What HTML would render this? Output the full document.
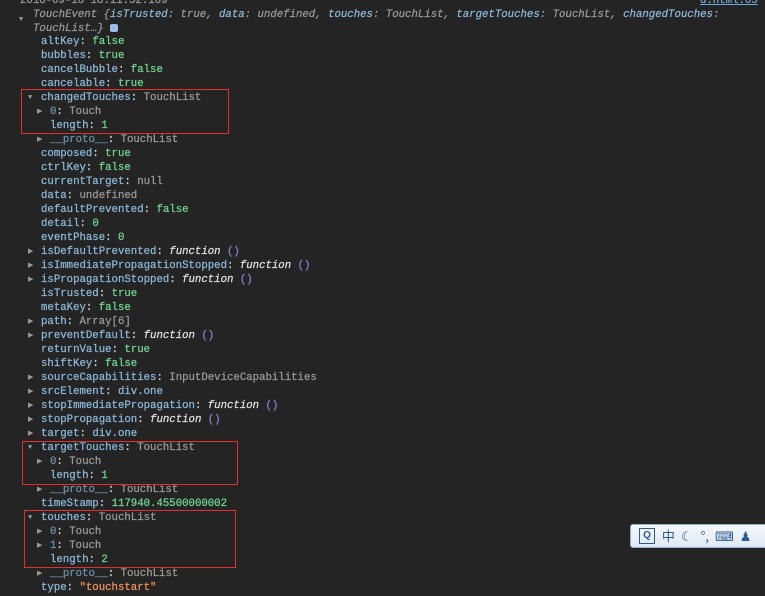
<!DOCTYPE html>
<html><head><meta charset="utf-8"><style>
body{margin:0;width:765px;height:596px;background:#242424;overflow:hidden;position:relative;font-family:"Liberation Mono",monospace;font-size:10.7px;}
.l{position:absolute;height:14px;line-height:14px;white-space:pre;color:#ccc;-webkit-text-stroke:0.25px currentColor}
.k{color:#8cb8d8}.g{color:#72d691}.n{color:#9a9a9a}.f{color:#e0e0e0;font-style:italic}.p{color:#8b7fd4}.s{color:#f0935a}.d{color:#6f8fa8}
.t{position:absolute;color:#9a9a9a;font-size:7px;line-height:14px}
.box{position:absolute;border:1px solid #e03030}
</style></head><body>
<div class="l n" style="left:20px;top:-6px">2018-09-18 18:11:52.169</div>
<div class="l" style="left:700px;top:-6px;color:#6fa8dc;text-decoration:underline">d.html:65</div>
<div class="t" style="left:19px;top:13px">▼</div>
<div class="l n" style="left:33px;top:8px;font-style:italic">TouchEvent {<span class="k">isTrusted</span>: true, <span class="k">data</span>: undefined, <span class="k">touches</span>: TouchList, <span class="k">targetTouches</span>: TouchList, <span class="k">changedTouches</span>:</div>
<div class="l n" style="left:33px;top:22px;font-style:italic">TouchList…} <span style="display:inline-block;width:8px;height:8px;background:#9bbfe6;border-radius:2px;vertical-align:-1px"></span></div>

<div id="rows"></div>
<div class="box" style="left:21px;top:89px;width:206px;height:43px"></div>
<div class="box" style="left:22px;top:441px;width:214px;height:42px"></div>
<div class="box" style="left:24px;top:510px;width:210px;height:56px"></div>

<div style="position:absolute;left:630px;top:524px;width:140px;height:24px;background:linear-gradient(#f4f8fc,#dfe8f2);border:1px solid #8fb0d8;border-radius:3px;box-sizing:border-box;font-family:'Noto Sans CJK SC',sans-serif;color:#2d5a96;font-size:13px;line-height:22px;white-space:nowrap">
<span style="display:inline-block;width:14px;height:14px;border:1px solid #2d5a96;margin:3px 0 0 8px;vertical-align:top;font:bold 10px/14px 'Liberation Sans',sans-serif;text-align:center">Q</span>
<span style="margin-left:4px">中</span><span style="margin-left:6px">☾</span><span style="margin-left:8px">°,</span><span style="margin-left:6px">⌨</span><span style="margin-left:6px">♟</span></div>

<script>
var R=[
[41,'<span class="k">altKey</span>: <span class="g">false</span>'],
[41,'<span class="k">bubbles</span>: <span class="g">true</span>'],
[41,'<span class="k">cancelBubble</span>: <span class="g">false</span>'],
[41,'<span class="k">cancelable</span>: <span class="g">true</span>'],
[41,'<span class="k">changedTouches</span>: <span class="n">TouchList</span>','▼'],
[50,'<span class="d">0</span>: <span class="n">Touch</span>','▶'],
[50,'<span class="k">length</span>: <span class="g">1</span>'],
[50,'<span class="d">__proto__</span>: <span class="n">TouchList</span>','▶'],
[41,'<span class="k">composed</span>: <span class="g">true</span>'],
[41,'<span class="k">ctrlKey</span>: <span class="g">false</span>'],
[41,'<span class="k">currentTarget</span>: <span class="n">null</span>'],
[41,'<span class="k">data</span>: <span class="n">undefined</span>'],
[41,'<span class="k">defaultPrevented</span>: <span class="g">false</span>'],
[41,'<span class="k">detail</span>: <span class="g">0</span>'],
[41,'<span class="k">eventPhase</span>: <span class="g">0</span>'],
[41,'<span class="k">isDefaultPrevented</span>: <span class="f">function</span> <span class="p">()</span>','▶'],
[41,'<span class="k">isImmediatePropagationStopped</span>: <span class="f">function</span> <span class="p">()</span>','▶'],
[41,'<span class="k">isPropagationStopped</span>: <span class="f">function</span> <span class="p">()</span>','▶'],
[41,'<span class="k">isTrusted</span>: <span class="g">true</span>'],
[41,'<span class="k">metaKey</span>: <span class="g">false</span>'],
[41,'<span class="k">path</span>: <span class="n">Array[6]</span>','▶'],
[41,'<span class="k">preventDefault</span>: <span class="f">function</span> <span class="p">()</span>','▶'],
[41,'<span class="k">returnValue</span>: <span class="g">true</span>'],
[41,'<span class="k">shiftKey</span>: <span class="g">false</span>'],
[41,'<span class="k">sourceCapabilities</span>: <span class="n">InputDeviceCapabilities</span>','▶'],
[41,'<span class="k">srcElement</span>: <span class="k">div.one</span>','▶'],
[41,'<span class="k">stopImmediatePropagation</span>: <span class="f">function</span> <span class="p">()</span>','▶'],
[41,'<span class="k">stopPropagation</span>: <span class="f">function</span> <span class="p">()</span>','▶'],
[41,'<span class="k">target</span>: <span class="k">div.one</span>','▶'],
[41,'<span class="k">targetTouches</span>: <span class="n">TouchList</span>','▼'],
[50,'<span class="d">0</span>: <span class="n">Touch</span>','▶'],
[50,'<span class="k">length</span>: <span class="g">1</span>'],
[50,'<span class="d">__proto__</span>: <span class="n">TouchList</span>','▶'],
[41,'<span class="k">timeStamp</span>: <span class="g">117940.45500000002</span>'],
[41,'<span class="k">touches</span>: <span class="n">TouchList</span>','▼'],
[50,'<span class="d">0</span>: <span class="n">Touch</span>','▶'],
[50,'<span class="d">1</span>: <span class="n">Touch</span>','▶'],
[50,'<span class="k">length</span>: <span class="g">2</span>'],
[50,'<span class="d">__proto__</span>: <span class="n">TouchList</span>','▶'],
[41,'<span class="k">type</span>: <span class="s">"touchstart"</span>']
];
var h='';R.forEach(function(r,i){var top=35+i*14;
if(r[2])h+='<div class="t" style="left:'+(r[0]-13)+'px;top:'+top+'px">'+r[2]+'</div>';
h+='<div class="l" style="left:'+r[0]+'px;top:'+top+'px">'+r[1]+'</div>';});
document.getElementById('rows').outerHTML=h;
</script>
</body></html>
